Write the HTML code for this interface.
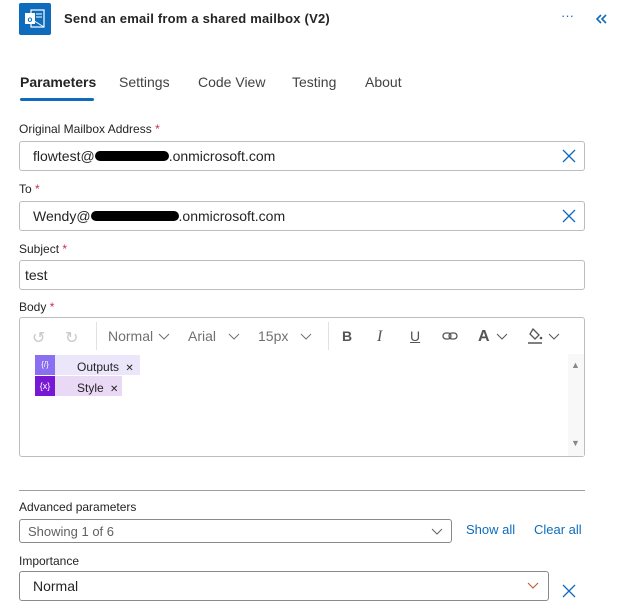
<!DOCTYPE html>
<html><head><style>
*{box-sizing:border-box;margin:0;padding:0}
body{width:619px;height:611px;background:#fff;font-family:"Liberation Sans",sans-serif;color:#242424;position:relative;overflow:hidden}
.a{position:absolute}
.lbl{position:absolute;left:19px;font-size:12px;color:#242424}
.lbl b{color:#c4314b;font-weight:normal}
.inp{position:absolute;left:19px;width:566px;border:1px solid #bdbdbd;border-radius:3px;font-size:14px;padding-left:13px;display:flex;align-items:center}
.x{position:absolute;width:14px;height:14px}
.tab{position:absolute;top:74px;font-size:14px;color:#424242}
.tb{position:absolute;top:328px;font-size:14px;color:#707070}
.cv{position:absolute;width:12px;height:7px}
</style></head><body>
<div class="a" style="left:19px;top:3px;width:32px;height:32px;background:#0f6cbd;border-radius:2px"></div>
<svg class="a" style="left:24px;top:9px" width="22" height="20" viewBox="0 0 22 20"><rect x="7" y="1" width="13" height="17" fill="none" stroke="#fff" stroke-width="1.2"/><path d="M7 10 L20 18 M12 5h6 M12 8h6" stroke="#fff" stroke-width="1"/><rect x="1" y="4" width="10" height="11" fill="#fff"/><text x="6" y="13" font-size="8" font-family="Liberation Sans" font-weight="bold" fill="#0f6cbd" text-anchor="middle">o</text></svg>
<div class="a" style="left:64px;top:11px;font-size:13px;font-weight:bold;letter-spacing:0.2px">Send an email from a shared mailbox (V2)</div>
<div class="a" style="left:561px;top:8px;font-size:13px;color:#0f6cbd">···</div>
<svg class="a" style="left:596px;top:14px" width="12" height="10" viewBox="0 0 12 10"><path d="M5 1L1 5L5 9M10 1L6 5L10 9" fill="none" stroke="#0f6cbd" stroke-width="1.6"/></svg>
<div class="tab" style="left:20px;color:#242424;font-weight:bold">Parameters</div>
<div class="a" style="left:20px;top:98px;width:74px;height:3px;background:#0f6cbd;border-radius:2px"></div>
<div class="tab" style="left:119px">Settings</div>
<div class="tab" style="left:198px">Code View</div>
<div class="tab" style="left:292px">Testing</div>
<div class="tab" style="left:365px">About</div>

<div class="lbl" style="top:122px">Original Mailbox Address <b>*</b></div>
<div class="inp" style="top:141px;height:30px">flowtest@<span style="display:inline-block;width:74px;height:10px;background:#000;border-radius:5px"></span>.onmicrosoft.com</div>
<svg class="x" style="left:562px;top:149px" viewBox="0 0 14 14"><path d="M1 1L13 13M13 1L1 13" stroke="#0f6cbd" stroke-width="1.3"/></svg>
<div class="lbl" style="top:182px">To <b>*</b></div>
<div class="inp" style="top:201px;height:30px">Wendy@<span style="display:inline-block;width:88px;height:10px;background:#000;border-radius:5px"></span>.onmicrosoft.com</div>
<svg class="x" style="left:562px;top:209px" viewBox="0 0 14 14"><path d="M1 1L13 13M13 1L1 13" stroke="#0f6cbd" stroke-width="1.3"/></svg>
<div class="lbl" style="top:242px">Subject <b>*</b></div>
<div class="inp" style="top:260px;height:30px;padding-left:5px">test</div>
<div class="lbl" style="top:300px">Body <b>*</b></div>
<div class="a" style="left:19px;top:317px;width:566px;height:140px;border:1px solid #bdbdbd;border-radius:3px"></div>
<div class="tb" style="left:32px;font-size:16px;color:#c8c8c8">↺</div>
<div class="tb" style="left:65px;font-size:16px;color:#c8c8c8">↻</div>
<div class="a" style="left:96px;top:322px;width:1px;height:28px;background:#e0e0e0"></div>
<div class="tb" style="left:108px">Normal</div>
<svg class="cv" style="left:158px;top:333px" viewBox="0 0 12 7"><path d="M1 1L6 6L11 1" fill="none" stroke="#707070"/></svg>
<div class="tb" style="left:188px">Arial</div>
<svg class="cv" style="left:228px;top:333px" viewBox="0 0 12 7"><path d="M1 1L6 6L11 1" fill="none" stroke="#707070"/></svg>
<div class="tb" style="left:258px">15px</div>
<svg class="cv" style="left:300px;top:333px" viewBox="0 0 12 7"><path d="M1 1L6 6L11 1" fill="none" stroke="#707070"/></svg>
<div class="a" style="left:328px;top:322px;width:1px;height:28px;background:#e0e0e0"></div>
<div class="tb" style="left:342px;font-weight:bold;color:#555">B</div>
<div class="tb" style="left:377px;font-style:italic;font-family:'Liberation Serif';font-size:16px;color:#555">I</div>
<div class="tb" style="left:410px;text-decoration:underline;color:#555">U</div>
<svg class="a" style="left:442px;top:332px" width="16" height="8" viewBox="0 0 16 8"><rect x="1" y="1" width="8" height="6" rx="3" fill="none" stroke="#555" stroke-width="1.3"/><rect x="7" y="1" width="8" height="6" rx="3" fill="none" stroke="#555" stroke-width="1.3"/></svg>
<div class="tb" style="left:478px;font-weight:bold;font-size:16px;color:#555">A</div>
<svg class="cv" style="left:496px;top:333px" viewBox="0 0 12 7"><path d="M1 1L6 6L11 1" fill="none" stroke="#555"/></svg>
<svg class="a" style="left:527px;top:327px" width="18" height="18" viewBox="0 0 18 18"><path d="M6 2L12 8L8 12L3 7Z" fill="none" stroke="#555" stroke-width="1.3"/><circle cx="14" cy="11" r="1.3" fill="#555"/><path d="M1 16h14" stroke="#555" stroke-width="1.5"/></svg>
<svg class="cv" style="left:548px;top:333px" viewBox="0 0 12 7"><path d="M1 1L6 6L11 1" fill="none" stroke="#555"/></svg>
<div class="a" style="left:35px;top:355px;width:105px;height:20px;background:#ece6fb"></div>
<div class="a" style="left:35px;top:355px;width:20px;height:20px;background:#8a6ff0;color:#fff;font-size:8px;text-align:center;line-height:20px">{/}</div>
<div class="a" style="left:77px;top:360px;font-size:12px">Outputs <span style="font-size:10px;margin-left:3px">✕</span></div>
<div class="a" style="left:35px;top:376px;width:87px;height:20px;background:#ead9f5"></div>
<div class="a" style="left:35px;top:376px;width:20px;height:20px;background:#7719d4;color:#fff;font-size:9px;text-align:center;line-height:20px">{x}</div>
<div class="a" style="left:77px;top:381px;font-size:12px">Style <span style="font-size:10px;margin-left:3px">✕</span></div>
<div class="a" style="left:568px;top:354px;width:16px;height:102px;background:#f8f8f8"></div>
<div class="a" style="left:571px;top:360px;font-size:9px;color:#888">▲</div>
<div class="a" style="left:571px;top:438px;font-size:9px;color:#888">▼</div>

<div class="a" style="left:19px;top:490px;width:566px;height:1px;background:#9e9e9e"></div>
<div class="lbl" style="top:500px">Advanced parameters</div>
<div class="inp" style="top:519px;width:433px;height:24px;padding-left:8px;font-size:13px;color:#616161;border-color:#8a8a8a">Showing 1 of 6</div>
<svg class="cv" style="left:431px;top:528px" viewBox="0 0 12 7"><path d="M1 1L6 6L11 1" fill="none" stroke="#616161"/></svg>
<div class="a" style="left:466px;top:522px;font-size:13px;color:#0f6cbd">Show all</div>
<div class="a" style="left:534px;top:522px;font-size:13px;color:#0f6cbd">Clear all</div>
<div class="lbl" style="top:554px">Importance</div>
<div class="inp" style="top:571px;width:530px;height:30px;border-color:#8a8a8a">Normal</div>
<svg class="cv" style="left:527px;top:582px" viewBox="0 0 12 7"><path d="M1 1L6 6L11 1" fill="none" stroke="#c0502a"/></svg>
<svg class="x" style="left:562px;top:584px" viewBox="0 0 14 14"><path d="M1 1L13 13M13 1L1 13" stroke="#0f6cbd" stroke-width="1.3"/></svg>
</body></html>
